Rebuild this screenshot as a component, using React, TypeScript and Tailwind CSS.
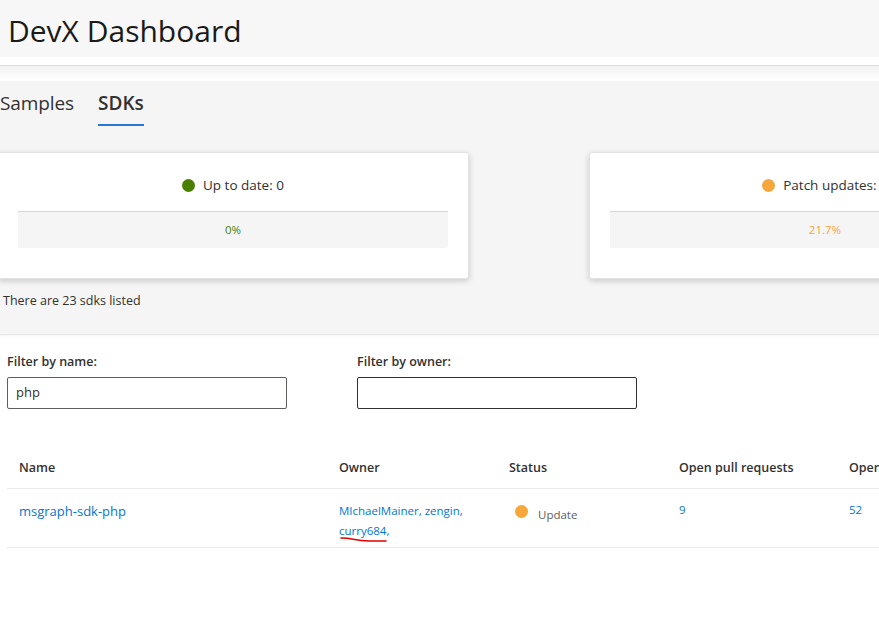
const font = { fontFamily: '"Open Sans", "Noto Sans", sans-serif' };

function StatCard({ dot, label, pct, pctColor }: { dot: string; label: string; pct: string; pctColor: string }) {
  return (
    <div className="w-[472px] shrink-0 h-[127px] bg-white rounded-[3px] border border-[#e3e3e3] shadow-[0_2px_6px_rgba(0,0,0,0.18)] px-5 pt-[23px]">
      <div className="flex items-center justify-center gap-2 h-[18px] whitespace-nowrap">
        <span className={`w-[13px] h-[13px] rounded-full ${dot}`} />
        <span className="text-[13.5px] text-[#323130]">{label}</span>
      </div>
      <div className="mt-[17px] border-t border-[#d6d6d6] bg-[#f5f5f5] h-[37px] rounded-b-[2px] flex items-center justify-center">
        <span className={`text-[11.5px] ${pctColor}`}>{pct}</span>
      </div>
    </div>
  );
}

export default function App() {
  return (
    <div className="w-[879px] h-[622px] overflow-hidden bg-white text-[#323130]" style={font}>
      {/* Header */}
      <div className="h-[57px] bg-[#f7f7f7] flex items-center pl-[8px]">
        <h1 className="text-[30px] leading-none text-[#1b1a19] pt-[4px]">DevX Dashboard</h1>
      </div>
      <div className="h-[8px] bg-white" />
      <div className="h-[16px] border-t border-[#dcdcdc] bg-gradient-to-b from-[#f2f2f2] to-white" />

      {/* Gray section */}
      <div className="h-[254px] bg-[#f5f5f5] border-b border-[#e8e8e8] shadow-[0_1px_2px_rgba(0,0,0,0.05)]">
        <div className="flex gap-[24px] h-[45px] items-end">
          <div className="h-[45px] flex items-center text-[19px] text-[#323130] tracking-[-0.1px]">Samples</div>
          <div className="h-[45px] flex flex-col justify-center relative">
            <span className="text-[19px] font-semibold text-[#323130]">SDKs</span>
            <span className="absolute left-0 right-0 bottom-0 h-[2px] bg-[#2b78d4]" />
          </div>
        </div>
        <div className="flex gap-[120px] ml-[-3px] mt-[26px]">
          <StatCard dot="bg-[#4a7f00]" label="Up to date: 0" pct="0%" pctColor="text-[#4a7f00]" />
          <StatCard dot="bg-[#f7a63a]" label="Patch updates: 5" pct="21.7%" pctColor="text-[#f7a63a]" />
        </div>
        <p className="mt-[13px] pl-[3px] text-[12.5px] text-[#323130]">There are 23 sdks listed</p>
      </div>

      {/* Filters */}
      <div className="flex gap-[70px] pl-[7px] pt-[18px]">
        <div className="flex flex-col">
          <label className="text-[12.5px] font-semibold text-[#323130] h-[20px]">Filter by name:</label>
          <div className="mt-[4px] w-[280px] h-[32px] border border-[#605e5c] rounded-[2px] flex items-center pl-[8px] text-[13px] text-[#323130]">php</div>
        </div>
        <div className="flex flex-col">
          <label className="text-[12.5px] font-semibold text-[#323130] h-[20px]">Filter by owner:</label>
          <div className="mt-[4px] w-[280px] h-[32px] border border-[#323130] rounded-[2px]" />
        </div>
      </div>

      {/* Table */}
      <div className="ml-[7px] mt-[44px] w-[1100px]">
        <div className="flex h-[36px] items-center pb-[4px] border-b border-[#edebe9] text-[12.5px] font-semibold text-[#323130] whitespace-nowrap">
          <div className="w-[332px] shrink-0 pl-[12px]">Name</div>
          <div className="w-[170px] shrink-0">Owner</div>
          <div className="w-[170px] shrink-0">Status</div>
          <div className="w-[170px] shrink-0">Open pull requests</div>
          <div className="w-[170px] shrink-0">Open issues</div>
        </div>
        <div className="flex h-[59px] border-b border-[#edebe9] text-[12.5px] pt-[12px] whitespace-nowrap">
          <div className="w-[332px] shrink-0 pl-[12px] text-[#0078d4] text-[13px] pt-[1px]">msgraph-sdk-php</div>
          <div className="w-[170px] shrink-0 text-[#0078d4] text-[11.5px] leading-[20px] relative">
            <div>MIchaelMainer, zengin,</div>
            <div>curry684,</div>
            <svg className="absolute left-[1px] top-[35px]" width="48" height="8" viewBox="0 0 48 8">
              <path d="M1 2 C8 2 12 3 18 4 C24 5 30 5 34 5 C38 5 42 5 46 5" stroke="#e00000" strokeWidth="1.6" fill="none" strokeLinecap="round" />
            </svg>
          </div>
          <div className="w-[170px] shrink-0 flex items-start gap-[10px] pl-[6px] pt-[4px]">
            <span className="w-[13px] h-[13px] rounded-full bg-[#f7a63a]" />
            <span className="text-[11.5px] text-[#605e5c] mt-[1px]">Update</span>
          </div>
          <div className="w-[170px] shrink-0 text-[#0078d4] text-[11.5px]">9</div>
          <div className="w-[170px] shrink-0 text-[#0078d4] text-[11.5px]">52</div>
        </div>
      </div>
    </div>
  );
}
